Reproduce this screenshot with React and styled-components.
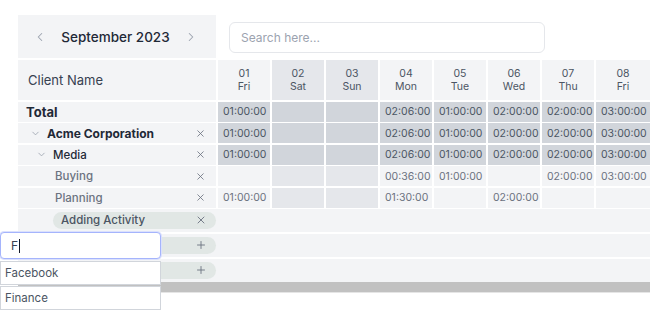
import React from "react";
import styled, { createGlobalStyle } from "styled-components";
import { ChevronLeft, ChevronRight, ChevronDown, X, Plus } from "lucide-react";

const Global = createGlobalStyle`
  html, body { margin: 0; padding: 0; background: #fff; overflow: hidden; }
  body { font-family: Inter, "Noto Sans", sans-serif; color: #374151; }
  * { box-sizing: border-box; }
`;

const Page = styled.div`
  position: relative;
  width: 650px;
  height: 312px;
  padding: 15px 0 0 18px;
  overflow: hidden;
`;

const TopBar = styled.div`
  display: flex;
  align-items: flex-start;
  gap: 13px;
  height: 45px;
`;

const MonthNav = styled.div`
  width: 198px;
  height: 43px;
  background: #f3f4f6;
  display: flex;
  align-items: center;
  padding: 0 18px 0 15px;
`;

const NavBtn = styled.span`
  display: flex;
  align-items: center;
  color: #9ca3af;
`;

const MonthLabel = styled.span`
  flex: 1;
  text-align: center;
  font-size: 13.5px;
  font-weight: 500;
  color: #1f2937;
`;

const Search = styled.div`
  margin-top: 7px;
  width: 316px;
  height: 31px;
  border: 1px solid #e5e7eb;
  border-radius: 6px;
  display: flex;
  align-items: center;
  padding-left: 11px;
  font-size: 12px;
  color: #9ca3af;
`;

const TableWrap = styled.div`
  width: 632px;
  overflow: hidden;
`;

const Grid = styled.div`
  display: grid;
  grid-template-columns: 198px repeat(7, 52px) 54px;
  grid-template-rows: 40px repeat(5, 20px);
  column-gap: 2px;
  row-gap: 1.5px;
  width: max-content;
`;

const HeadLeft = styled.div`
  background: #f3f4f6;
  display: flex;
  align-items: center;
  padding-left: 10px;
  font-size: 13px;
  color: #374151;
`;

const HeadDay = styled.div`
  background: ${(p) => (p.$weekend ? "#e5e7eb" : "#f3f4f6")};
  display: flex;
  flex-direction: column;
  align-items: center;
  justify-content: center;
  font-size: 10.5px;
  line-height: 13px;
  color: #4b5563;
`;

const LeftCell = styled.div`
  background: #f3f4f6;
  display: flex;
  align-items: center;
  padding-left: ${(p) => p.$indent}px;
  padding-right: 10px;
  font-size: ${(p) => (p.$total ? "13px" : p.$bold ? "12px" : "11.5px")};
  font-weight: ${(p) => p.$weight};
  color: ${(p) => (p.$muted ? "#6b7280" : "#1f2937")};
  gap: 6px;
`;

const Label = styled.span`
  flex: 1;
`;

const Icon = styled.span`
  display: flex;
  align-items: center;
  color: ${(p) => p.$color || "#6b7280"};
`;

const Cell = styled.div`
  background: ${(p) => (p.$filled ? "#d1d5db" : p.$weekend ? "#e5e7eb" : "#f3f4f6")};
  display: flex;
  align-items: center;
  padding-left: 5px;
  font-size: 10.5px;
  color: ${(p) => (p.$filled ? "#4b5563" : "#6b7280")};
`;

const ActivityRows = styled.div`
  display: flex;
  flex-direction: column;
  gap: 2px;
  margin-top: 1px;
`;

const ActivityRow = styled.div`
  height: 23px;
  background: #f3f4f6;
  display: flex;
  align-items: center;
  padding-left: 35px;
`;

const Pill = styled.div`
  width: 163px;
  height: 17px;
  border-radius: 9px;
  background: #e1e7e5;
  display: flex;
  align-items: center;
  padding: 0 9px 0 8px;
  font-size: 11.5px;
  font-weight: 500;
  color: #4b5563;
`;

const Scrollbar = styled.div`
  height: 11px;
  background: #c1c1c1;
  border-bottom: 1px solid #e5e5e5;
`;

const Combo = styled.div`
  position: absolute;
  left: 0;
  top: 232px;
  width: 161px;
  display: flex;
  flex-direction: column;
  gap: 2px;
`;

const Input = styled.div`
  height: 27px;
  border: 1px solid #a5b4fc;
  box-shadow: 0 0 0 1px #dbe1fd;
  border-radius: 4px;
  background: #fff;
  display: flex;
  align-items: center;
  padding-left: 10px;
  font-size: 12px;
  color: #374151;
`;

const Caret = styled.span`
  display: inline-block;
  width: 1px;
  height: 14px;
  background: #111827;
  margin-left: 1px;
`;

const Option = styled.div`
  height: 24px;
  border: 1px solid #d1d5db;
  background: #fff;
  display: flex;
  align-items: center;
  padding-left: 4px;
  font-size: 11.5px;
  color: #4b5563;
  margin-top: ${(p) => (p.$first ? "0" : "-1px")};
`;

const days = [
  ["01", "Fri"], ["02", "Sat"], ["03", "Sun"], ["04", "Mon"], ["05", "Tue"],
  ["06", "Wed"], ["07", "Thu"], ["08", "Fri"],
];
const weekend = (i) => days[i][1] === "Sat" || days[i][1] === "Sun";

const full = ["01:00:00", "", "", "02:06:00", "01:00:00", "02:00:00", "02:00:00", "03:00:00"];

const rows = [
  { label: "Total", indent: 8, weight: 700, total: true, filled: true, values: full },
  { label: "Acme Corporation", indent: 12, weight: 700, bold: true, chevron: true, close: true, filled: true, values: full },
  { label: "Media", indent: 18, weight: 500, chevron: true, close: true, filled: true, values: full },
  { label: "Buying", indent: 37, weight: 500, muted: true, close: true, values: ["", "", "", "00:36:00", "01:00:00", "", "02:00:00", "03:00:00"] },
  { label: "Planning", indent: 37, weight: 500, muted: true, close: true, values: ["01:00:00", "", "", "01:30:00", "", "02:00:00", "", ""] },
];

export default function App() {
  return (
    <>
      <Global />
      <Page>
        <TopBar>
          <MonthNav>
            <NavBtn><ChevronLeft size={14} strokeWidth={1.8} /></NavBtn>
            <MonthLabel>September 2023</MonthLabel>
            <NavBtn><ChevronRight size={14} strokeWidth={1.8} /></NavBtn>
          </MonthNav>
          <Search>Search here...</Search>
        </TopBar>
        <TableWrap>
          <Grid>
            <HeadLeft>Client Name</HeadLeft>
            {days.map(([d, w], i) => (
              <HeadDay key={d} $weekend={weekend(i)}>
                <span>{d}</span>
                <span>{w}</span>
              </HeadDay>
            ))}
            {rows.map((r) => (
              <React.Fragment key={r.label}>
                <LeftCell $indent={r.indent} $weight={r.weight} $muted={r.muted} $total={r.total} $bold={r.bold}>
                  {r.chevron && (
                    <Icon $color="#9ca3af"><ChevronDown size={11} strokeWidth={1.8} /></Icon>
                  )}
                  <Label>{r.label}</Label>
                  {r.close && <Icon><X size={11} strokeWidth={1.8} /></Icon>}
                </LeftCell>
                {r.values.map((v, i) => (
                  <Cell key={i} $filled={r.filled} $weekend={weekend(i)}>{v}</Cell>
                ))}
              </React.Fragment>
            ))}
          </Grid>
          <ActivityRows>
            <ActivityRow>
              <Pill>
                <Label>Adding Activity</Label>
                <Icon><X size={12} strokeWidth={1.8} /></Icon>
              </Pill>
            </ActivityRow>
            <ActivityRow>
              <Pill>
                <Label></Label>
                <Icon><Plus size={12} strokeWidth={1.8} /></Icon>
              </Pill>
            </ActivityRow>
            <ActivityRow>
              <Pill>
                <Label></Label>
                <Icon><Plus size={12} strokeWidth={1.8} /></Icon>
              </Pill>
            </ActivityRow>
          </ActivityRows>
          <Scrollbar />
        </TableWrap>
        <Combo>
          <Input>F<Caret /></Input>
          <Option $first>Facebook</Option>
          <Option>Finance</Option>
        </Combo>
      </Page>
    </>
  );
}
